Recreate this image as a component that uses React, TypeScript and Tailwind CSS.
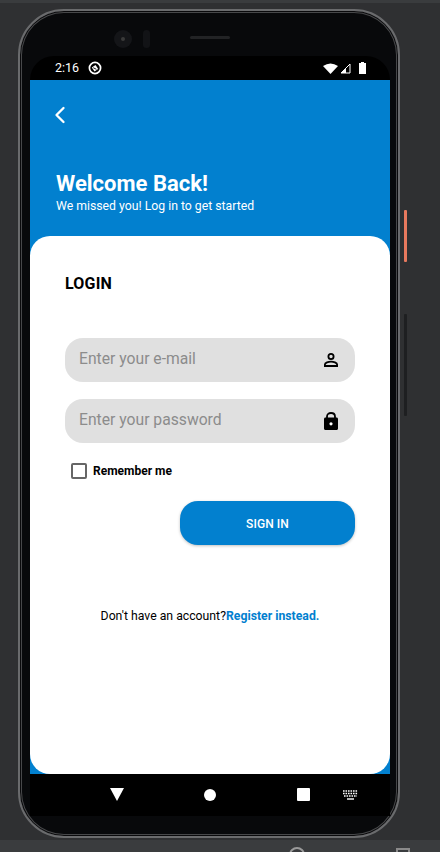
import React from 'react';
import { ChevronLeft } from 'lucide-react';

const font = { fontFamily: 'Roboto, sans-serif' };

function StatusBar() {
    return (
        <div className="h-[24px] flex items-center justify-between pl-[25px] pr-[24px] text-white">
            <div className="flex items-center gap-[9px]">
                <span className="text-[12.5px] leading-none">2:16</span>
                <svg width="14" height="14" viewBox="0 0 14 14">
                    <circle cx="7" cy="7" r="5.6" fill="none" stroke="white" strokeWidth="1.7" />
                    <path d="M3.8 6.5 L7.5 4 L10.2 8 L6.5 10.4 Z" fill="white" />
                    <path d="M5.2 6.7 L8.4 8.3" stroke="black" strokeWidth="0.9" />
                </svg>
            </div>
            <div className="flex items-center gap-[2px]">
                <svg width="15" height="11" viewBox="0 0 15 11">
                    <path d="M0 3 Q7.5 -2 15 3 L7.5 11 Z" fill="white" />
                </svg>
                <svg width="11" height="11" viewBox="0 0 11 11">
                    <path d="M10 1 V10 H1 Z" fill="none" stroke="white" strokeWidth="1" />
                    <path d="M6 5 V10 H1 Z" fill="white" />
                </svg>
                <svg width="7" height="12" viewBox="0 0 7 12" className="ml-[6px]">
                    <path d="M2 0 H5 V1 H7 V12 H0 V1 H2 Z" fill="white" />
                </svg>
            </div>
        </div>
    );
}

function NavBar() {
    return (
        <div className="h-[42px] bg-black relative flex items-start rounded-b-[24px]">
            <svg width="14" height="13" viewBox="0 0 14 13" className="absolute left-[80px] top-[14px]">
                <path d="M0 0 H14 L7 13 Z" fill="white" />
            </svg>
            <div className="absolute left-[174px] top-[15px] w-[12px] h-[12px] rounded-full bg-white" />
            <div className="absolute left-[267px] top-[14px] w-[13px] h-[13px] rounded-[1px] bg-white" />
            <svg width="15" height="10" viewBox="0 0 15 10" className="absolute left-[313px] top-[16px]">
                <path d="M0 1 H15 M0 3.5 H15 M1 6 H14" stroke="white" strokeWidth="1.6" strokeDasharray="1.6 0.9" />
                <path d="M4 9 H11" stroke="white" strokeWidth="1.4" />
            </svg>
        </div>
    );
}

function LoginCard() {
    return (
        <div className="flex-1 bg-white rounded-[20px] pt-[37px] pl-[35px] pr-[35px] flex flex-col">
            <h2 className="mt-[1px] text-[16px] leading-[20px] font-bold text-black tracking-[0.2px]">LOGIN</h2>

            <div className="mt-[44px] h-[44px] rounded-[18px] bg-[#e0e0e0] flex items-center justify-between pl-[14px] pr-[15px]">
                <span className="text-[15.7px] text-[#8c8c8c] -mt-[3px]">Enter your e-mail</span>
                <svg width="18" height="18" viewBox="0 0 18 18" fill="none" stroke="black" strokeWidth="1.8">
                    <circle cx="9" cy="5.5" r="2.6" />
                    <path d="M2.9 15 V13.5 C2.9 11.6 6.5 10.6 9 10.6 C11.5 10.6 15.1 11.6 15.1 13.5 V15 Z" />
                </svg>
            </div>

            <div className="mt-[17px] h-[44px] rounded-[18px] bg-[#e0e0e0] flex items-center justify-between pl-[14px] pr-[15px]">
                <span className="text-[15.7px] text-[#8c8c8c] -mt-[3px]">Enter your password</span>
                <svg width="18" height="20" viewBox="0 0 18 20">
                    <path d="M5 7 V5.5 C5 3.2 6.8 2 9 2 C11.2 2 13 3.2 13 5.5 V7" fill="none" stroke="black" strokeWidth="1.8" />
                    <path d="M2 8 C2 7.1 2.6 6.5 3.5 6.5 H14.5 C15.4 6.5 16 7.1 16 8 V17.5 C16 18.4 15.4 19 14.5 19 H3.5 C2.6 19 2 18.4 2 17.5 Z" fill="black" />
                    <circle cx="9" cy="12.8" r="1.6" fill="white" />
                </svg>
            </div>

            <div className="mt-[20px] ml-[6px] flex items-center gap-[6px]">
                <div className="w-[16px] h-[16px] rounded-[2px] border-2 border-[#666666] bg-white" />
                <span className="text-[12px] leading-[16px] font-bold text-black">Remember me</span>
            </div>

            <div className="mt-[22px] flex justify-end">
                <button className="w-[175px] h-[44px] pt-[2px] rounded-[18px] bg-[#0280cf] text-white text-[12px] font-medium tracking-[0.1px] shadow-[0_1px_3px_rgba(0,0,0,0.25)]">
                    SIGN IN
                </button>
            </div>

            <p className="mt-[63px] text-center text-[12.25px] leading-[16px] text-black">
                Don't have an account?<span className="font-bold text-[#0280cf]">Register instead.</span>
            </p>
        </div>
    );
}

export default function App() {
    return (
        <div className="w-[440px] h-[852px] bg-[#2f3032] relative overflow-hidden" style={font}>
            {/* Emulator frame */}
            <div className="pt-[9px] pl-[18px]">
                <div className="w-[382px] h-[829px] rounded-[46px] border-2 border-[#6a6b6d] bg-[#08090b] pt-[45px] pl-[10px] pr-[8px] shadow-[inset_0_0_0_1px_#0a0a0c,inset_0_0_0_2px_#47484a]">
                    <div className="w-[360px] h-[760px] flex flex-col rounded-t-[24px] bg-black">
                        <StatusBar />
                        <div className="flex-1 bg-[#0280cf] flex flex-col">
                            <div className="pl-[18px] pt-[21px] h-[156px] text-white">
                                <ChevronLeft size={28} strokeWidth={2} className="-ml-[2px]" />
                                <h1 className="mt-[42px] ml-[8px] text-[22px] leading-[26px] font-bold">Welcome Back!</h1>
                                <p className="mt-[1px] ml-[8px] text-[12.25px] leading-[16px]">We missed you! Log in to get started</p>
                            </div>
                            <LoginCard />
                        </div>
                        <NavBar />
                    </div>
                </div>
            </div>

            {/* Camera and speaker */}
            <div className="absolute left-[114px] top-[30px] w-[18px] h-[18px] rounded-full bg-[#141518] flex items-center justify-center">
                <div className="w-[4px] h-[4px] rounded-full bg-[#3a3a3a]" />
            </div>
            <div className="absolute left-[143px] top-[30px] w-[7px] h-[18px] rounded-[4px] bg-[#121316]" />
            <div className="absolute left-[190px] top-[36px] w-[40px] h-[3px] rounded-[2px] bg-[#222325]" />

            {/* Side buttons */}
            <div className="absolute left-[404px] top-[210px] w-[3px] h-[52px] bg-[#e8795e] rounded-[1px]" />
            <div className="absolute left-[404px] top-[314px] w-[3px] h-[102px] bg-[#1e1f21] rounded-[1px]" />

            {/* Window toolbar strips */}
            <div className="absolute left-0 right-0 top-0 h-[3px] bg-[#3a3c3e]" />
            <div className="absolute left-0 right-0 bottom-0 h-[12px] bg-[#3a3c3e]">
                <div className="absolute left-[289px] top-[7px] w-[16px] h-[16px] rounded-full border-2 border-[#9a9a9a]" />
                <div className="absolute left-[396px] top-[8px] w-[14px] h-[8px] border-2 border-[#8a8a8a]" />
            </div>
        </div>
    );
}
